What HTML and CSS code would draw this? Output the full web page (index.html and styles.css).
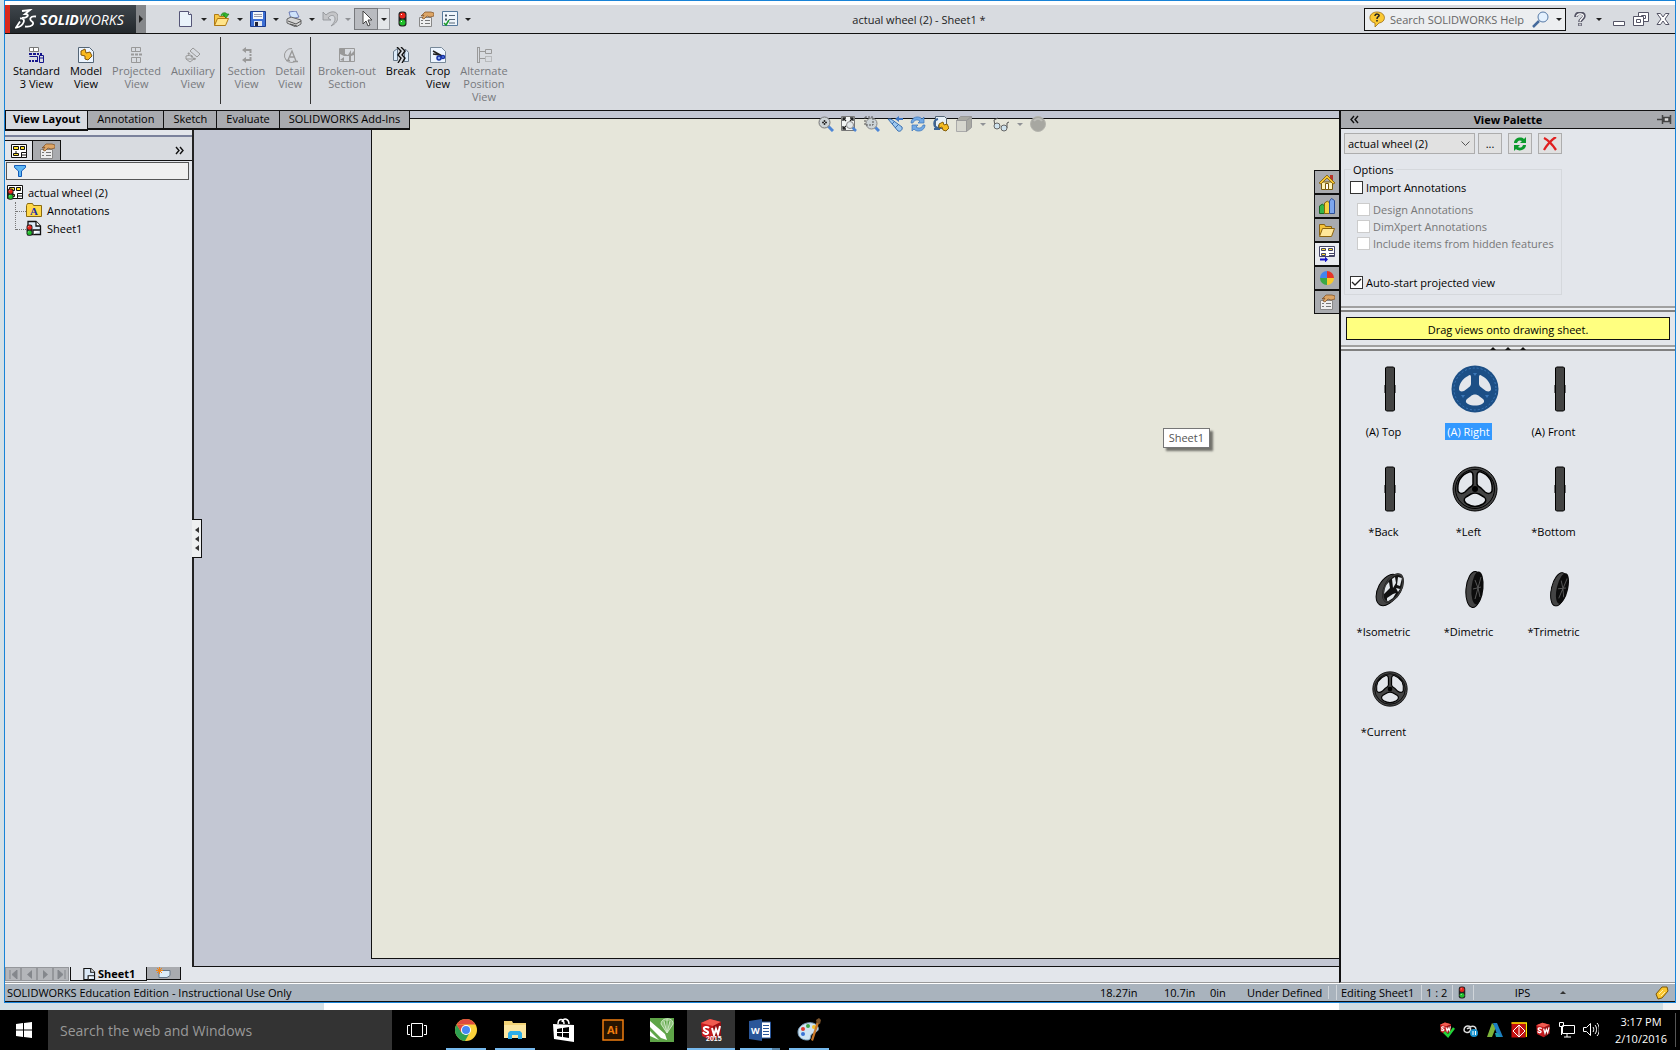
FILE: index.html
```html
<!DOCTYPE html>
<html lang="en">
  <head>
    <meta charset="UTF-8" />
    <meta name="viewport" content="width=device-width, initial-scale=1.0" />
    <title>actual wheel (2) - Sheet1 *</title>
    <link rel="stylesheet" href="styles.css">
  </head>
  <body>
    <!-- shared symbols -->
    <svg class="symbols" width="0" height="0" aria-hidden="true">
      <symbol id="props" viewBox="0 0 16 16">
        <path d="M1.500 6.500h12v9h-12z" fill="#eee" stroke="#888" />
        <path d="M3 9.500h2M7 9.500h5M3 12.500h2M7 12.500h5" stroke="#777" />
        <path d="M3 5l4-4h6l3 1v3l-4 1-3-1-3 3-2-1 2-3z" fill="#dca566" stroke="#7a4a1e" stroke-width=".7" />
      </symbol>
      <symbol id="light" viewBox="0 0 9 16">
        <rect x=".5" y=".5" width="8" height="15" rx="3" fill="#222" />
        <circle cx="4.500" cy="4.500" r="3" fill="#e8241c" />
        <circle cx="4.500" cy="11.500" r="3" fill="#1fbf2a" />
        <path d="M3 3.500h1M3 10.500h1" stroke="#fff" />
      </symbol>
      <symbol id="sheetset" viewBox="0 0 16 16">
        <path d="M.500 1.500h15v13H.500z" fill="#fff" stroke="#111" />
        <path d="M2.500 3.500h5v3h-5zM9.500 3.500h4v3h-4zM5 8v2.500M2.500 12.500v-2h5v2z" fill="#ffe12a" stroke="#111" />
        <path d="M10.500 9.500h5v5h-5zM10.500 12h5" fill="#fff" stroke="#111" />
      </symbol>
      <symbol id="page" viewBox="0 0 16 16">
        <path d="M2 1.500h8l4.500 4.500v8.500H2z" fill="#dbe9f7" stroke="#111" stroke-width="1.300" />
        <path d="M10 1.500V6h4.500M7 14.500V10h7.500" fill="#fff" stroke="#111" stroke-width="1.300" />
      </symbol>
      <symbol id="spokes" viewBox="0 0 46 46">
        <circle cx="23" cy="23" r="22" fill="#444" stroke="#000" />
        <circle cx="23" cy="23" r="19.500" fill="none" stroke="#000" />
        <path d="M17 6c3-1 4 1 4 4v8c0 2-2 3-4 4l-4 4c-3 2-6 2-7-1C5 16 9 9 17 6zM29 6c-3-1-4 1-4 4v8c0 2 2 3 4 4l4 4c3 2 6 2 7-1 1-9-3-16-11-19zM19 28c2-1 6-1 8 0l5 3c3 2 2 5-1 7-5 3-11 3-16 0-3-2-4-5-1-7z" fill="#e3e6eb" stroke="#000" stroke-width="1.500" />
        <circle cx="23" cy="23" r="3" fill="#000" />
      </symbol>
      <symbol id="edge" viewBox="0 0 12 46">
        <path d="M.500 19v8h11v-8z" fill="#000" />
        <path d="M1.500 2l1-1h7l1 1v42l-1 1h-7l-1-1z" fill="#444" stroke="#000" />
      </symbol>
      <symbol id="tilted" viewBox="0 0 30 36">
        <ellipse cx="13" cy="19" rx="10" ry="17" transform="rotate(28 13 19)" fill="#444" stroke="#000" />
        <ellipse cx="18" cy="17" rx="9" ry="16" transform="rotate(28 18 17)" fill="#111" />
        <path d="M17 8l3-2 1 6-3 5zM23 6l4 1-2 8-3-1zM10 15l4-4 1 6-6 6zM12 27l6-4 3-1-3 5-6 4zM21 17l4 1-2 3z" fill="#e2e6ea" />
        <ellipse cx="18" cy="17" rx="8" ry="15" transform="rotate(28 18 17)" fill="none" stroke="#3a3a3a" stroke-width="1.500" />
      </symbol>
      <symbol id="narrow" viewBox="0 0 20 38">
        <ellipse cx="9" cy="19.500" rx="8" ry="18" transform="rotate(5 9 19)" fill="#444" stroke="#000" />
        <ellipse cx="12.500" cy="18" rx="6" ry="16.500" transform="rotate(5 12 18)" fill="#0c0c0c" />
        <path d="M10 10l3 8-3 11M16 7l-3 11 2 9M8 19l8-2" stroke="#555" fill="none" />
      </symbol>
      <symbol id="cube" viewBox="0 0 24 24">
        <path d="M2 5l9-4 11 3v13l-9 6-10-5z" fill="#c61a1d" />
        <path d="M2 5l9-4 11 3-8 4z" fill="#f05b50" />
        <path d="M14 8l8-4v13l-9 6z" fill="#961013" />
        <path d="M10 10c-2-2-6-1-5 1s5 2 4 4-4 1-5-1M13 10l2 7 2-6 2 5 2-8" fill="none" stroke="#fff" stroke-width="2" />
      </symbol>
    </svg>

    <div class="window">
      <header class="titlebar">
        <div class="logo">
          <svg width="22" height="20" viewBox="0 0 22 20"><path d="M7 2l8-1-5 4c5 0 3 4-3 4M5 9.500c7-1 4 8-4 9l4-6M21 7.500c-6-1-7 3-4 5s0 6-7 5" fill="none" stroke="#fff" stroke-width="1.800" /></svg>
          <span class="logo-text"><b>SOLID</b>WORKS</span>
        </div>
        <button class="logo-arrow" aria-label="Menu"><span class="arrow-right"></span></button>
        <nav class="quick">
          <button class="tool" aria-label="New"><svg width="16" height="16"><path d="M1.500.500h9l3 3v12h-12z" fill="#eaf3fb" stroke="#557" /><path d="M10.500.500v3h3" fill="#fff" stroke="#557" /></svg></button>
          <button class="drop" aria-label="New options"></button>
          <button class="tool" aria-label="Open"><svg width="16" height="16"><path d="M.500 14.500v-11h4l1 2h6v3" fill="#f7c847" stroke="#b07a14" /><path d="M.500 14.500l3-7h11l-3 7z" fill="#ffe48a" stroke="#b07a14" /><path d="M7 5c0-4 5-4 6-2h2l-3 4-3-3h2" fill="#35b52f" stroke="#157515" stroke-width=".6" /></svg></button>
          <button class="drop" aria-label="Open options"></button>
          <button class="tool" aria-label="Save"><svg width="16" height="16"><path d="M.500.500h15v15h-15z" fill="#3d6fd4" stroke="#1b3a8c" /><path d="M3 1h10v7H3z" fill="#f4f7fb" /><path d="M4 3.500h8M4 5.500h8" stroke="#99a" /><path d="M4 10h8v5H4z" fill="#dfe6f2" /><path d="M5 11h3v4H5z" fill="#223" /></svg></button>
          <button class="drop" aria-label="Save options"></button>
          <button class="tool" aria-label="Print"><svg width="16" height="16"><path d="M3 1l7-1 3 6-8 2z" fill="#cfe3fa" stroke="#56a" stroke-width=".8" /><path d="M1 8l4-2 10 3v4l-5 3-9-4z" fill="#d5d5d5" stroke="#555" stroke-width=".9" /><path d="M2 10l8 3 5-3M4 13l7 2" stroke="#555" fill="none" /></svg></button>
          <button class="drop" aria-label="Print options"></button>
          <button class="tool" aria-label="Undo" disabled><svg width="16" height="16"><path d="M1 1v8h8L6 7c3-4 7-3 7 1 0 2-1 4-4 7 5-2 7-6 7-9 0-6-7-7-12-2z" fill="#c4c5c8" stroke="#8e9094" stroke-width=".8" /></svg></button>
          <button class="drop faded" aria-label="Undo options" disabled></button>
          <button class="tool pressed" aria-label="Select"><svg width="16" height="16"><path d="M5 0v13l3-3 2 5 2-1-2-5h4z" fill="#fff" stroke="#444" /></svg></button>
          <button class="drop boxed" aria-label="Select options"></button>
          <button class="tool" aria-label="Rebuild"><svg width="9" height="16"><use href="#light" /></svg></button>
          <button class="tool" aria-label="File properties"><svg width="16" height="16"><use href="#props" /></svg></button>
          <button class="tool" aria-label="Options"><svg width="16" height="16"><path d="M.500.500h15v14H.500z" fill="#eef4fa" stroke="#56799c" /><path d="M7 4.500h6M7 8.500h6M7 12h6" stroke="#567" /><path d="M3 3.500h2v2H3zM3 7.500h2v2H3z" fill="#456" /><path d="M2 12l2 2 3-5" fill="none" stroke="#1a9a2b" stroke-width="1.500" /></svg></button>
          <button class="drop" aria-label="More options"></button>
        </nav>
        <h1 class="title">actual wheel (2) - Sheet1 *</h1>
        <div class="help-search">
          <svg width="17" height="17"><path d="M8 1c9 0 10 10 2 11l-4 4V12C-2 10 0 1 8 1z" fill="#fbc933" stroke="#9a6c10" stroke-width=".8" /><path d="M6 5c0-3 5-2 4 0-1 1-2 1-2 3M8 9v1.500" fill="none" stroke="#222" stroke-width="1.500" /></svg>
          <input type="text" placeholder="Search SOLIDWORKS Help" aria-label="Search SOLIDWORKS Help">
          <svg width="17" height="17"><circle cx="11" cy="6" r="5" fill="#e3f1ff" stroke="#567aa6" /><path d="M7 10l-6 6" stroke="#456a9c" stroke-width="2.500" /></svg>
          <button class="drop" aria-label="Search options"></button>
        </div>
        <div class="window-buttons">
          <button aria-label="Help"><svg width="12" height="15"><path d="M2 5c0-5 8-5 8-1 0 3-4 3-4 6M6 11v3" fill="none" stroke="#556" stroke-width="3.500" /><path d="M2.500 4.500C3 1 9 1 9.500 4c0 2-3.500 3-3.500 5.500M6 11.500v2" fill="none" stroke="#fff" stroke-width="1.300" /></svg></button>
          <button class="drop" aria-label="Help options"></button>
          <button aria-label="Minimize"><svg width="14" height="14"><path d="M1.500 9.500h11v4h-11z" fill="#fff" stroke="#556" /></svg></button>
          <button aria-label="Restore"><svg width="16" height="14"><path d="M5.500.500h10v9h-10zM8.500 3.500h4v3h-4z" fill="#fff" stroke="#556" /><path d="M.500 4.500h10v9H.500zM3.500 7.500h4v3h-4z" fill="#fff" stroke="#556" /></svg></button>
          <button aria-label="Close"><svg width="14" height="14"><path d="M1 1.500h3.500L7 5l2.500-3.500H13L9 7l4 5.500H9.500L7 9l-2.500 3.500H1L5 7z" fill="#fff" stroke="#556" /></svg></button>
        </div>
      </header>

      <section class="ribbon">
        <button><svg width="16" height="16"><path d="M1.500.500h9v4h-9z" fill="#fff" stroke="#777" /><path d="M5.500.500v4h5" stroke="#777" fill="none" /><path d="M1 6h3v2H1zM5 6h3v2H5zM9 6h2v2H9zM12 6h2v2h-2zM1 13h2v2H1zM4 13h2v2H4zM7 13h3v2H7z" fill="#15158c" /><path d="M1.500 9.500h8v4M11.500 8.500h4v7h-4zM11.500 11h4" fill="none" stroke="#15158c" /></svg>Standard<br>3 View</button>
        <button><svg width="16" height="16"><path d="M.500.500h11l4 4v11H.500z" fill="#edf5ff" stroke="#567" /><path d="M3 4l4-2 1 4 4-1 2 4-4 4-3-1V9L3 8z" fill="#f9b91e" stroke="#83540a" /></svg>Model<br>View</button>
        <button disabled><svg width="16" height="16"><path d="M3.500.500h9v4h-9zM7.500.500v4M3.500 10.500h9v5h-9zM8.500 10.500v5" fill="none" stroke="#999" /><path d="M3 7.500h11" stroke="#999" stroke-width="2" stroke-dasharray="3 1" /></svg>Projected<br>View</button>
        <button disabled><svg width="16" height="16"><path d="M8 1l7 6-3 3-7-6zM1 9l5-1 3 4-4 3-4-3zM1 12h8" fill="none" stroke="#999" /><path d="M3 6l8 7" stroke="#999" stroke-width="2" stroke-dasharray="2 2" /></svg>Auxiliary<br>View</button>
        <hr>
        <button disabled><svg width="16" height="16"><path d="M6 3h6M11.500 2v4M11.500 7v2M11.500 10v4M6 13h6" stroke="#999" stroke-width="2" /><path d="M3 3l4-3v6zM3 13l4-3v6z" fill="#999" /></svg>Section<br>View</button>
        <button disabled><svg width="16" height="16"><path d="M10 1.500A7 7 0 1 0 13 14.500" fill="none" stroke="#999" /><path d="M6 13l4-9 4 10M8 10h5M4 13.500h4M11 14.500h5" fill="none" stroke="#999" stroke-width="1.300" /></svg>Detail<br>View</button>
        <hr>
        <button disabled><svg width="16" height="16"><path d="M.500 1.500h15v13H.500z" fill="none" stroke="#999" /><path d="M1 2h5v5l3 1 3-5v4l3-3v4l-3 1v5h-2V9H5L1 7zM1 13l4-3v4z" fill="#999" /></svg>Broken-out<br>Section</button>
        <button><svg width="16" height="16"><path d="M.500 4.500l4-3v12h-4zM12 2.500h1l2.500 3v9H11z" fill="#dcebfa" stroke="#678" /><path d="M4 0l4 4-3 4 3 3-3 5M8 0l4 4-3 4 3 3-3 5" fill="none" stroke="#111" stroke-width="1.400" /></svg>Break</button>
        <button><svg width="16" height="16"><path d="M.500.500h11l4 4v11H.500z" fill="#edf5ff" stroke="#789" /><path d="M3 4l9 5M3 7l7 1" stroke="#222" stroke-width="1.500" /><circle cx="9" cy="11" r="2" fill="#87a9f2" stroke="#1733a8" stroke-width="1.500" /><circle cx="13" cy="10" r="1.500" fill="#87a9f2" stroke="#1733a8" stroke-width="1.500" /></svg>Crop<br>View</button>
        <button disabled><svg width="16" height="16"><path d="M1.500.500v15M3.500.500v15M1 .500h3M1 15.500h3M3 4.500h6M3 11.500h6M9.500 2.500h6v4h-6z" fill="none" stroke="#999" /><path d="M9.500 9.500h6v5h-6z" fill="none" stroke="#999" stroke-dasharray="1 1" /></svg>Alternate<br>Position<br>View</button>
      </section>

      <main class="workspace">
        <nav class="ribbon-tabs">
          <button class="active">View Layout</button>
          <button>Annotation</button>
          <button>Sketch</button>
          <button>Evaluate</button>
          <button>SOLIDWORKS Add-Ins</button>
        </nav>

        <aside class="tree-panel">
          <div class="panel-tabs">
            <button class="active" aria-label="Feature manager"><svg width="16" height="16"><use href="#sheetset" /></svg></button>
            <button aria-label="Property manager"><svg width="16" height="16"><use href="#props" /></svg></button>
            <button class="expand" aria-label="Expand"><svg width="10" height="9"><path d="M1 1l3 3.500L1 8M5 1l3 3.500L5 8" fill="none" stroke="#111" stroke-width="1.400" /></svg></button>
          </div>
          <div class="filter">
            <svg width="12" height="12"><path d="M.500.500h11v2L7.500 6v5.500h-3V6l-4-3.500z" fill="#5eb6f2" stroke="#125ab8" /></svg>
            <input type="text" aria-label="Filter">
          </div>
          <ul class="tree">
            <li><svg width="16" height="16"><use href="#sheetset" /><use href="#light" y="4" width="7" height="12" /></svg>actual wheel (2)
              <ul>
                <li><svg width="16" height="16"><path d="M.500 3.500l1-2h5l1 2h8v11H.500z" fill="#ffd84a" stroke="#8a6a10" /><text x="4" y="13" class="note-letter">A</text></svg>Annotations</li>
                <li><svg width="16" height="16"><use href="#page" /><use href="#light" y="4" width="7" height="12" /></svg>Sheet1</li>
              </ul>
            </li>
          </ul>
          <button class="collapse" aria-label="Collapse panel"><span></span><span></span><span></span></button>
        </aside>

        <section class="canvas">
          <div class="sheet"></div>
          <div class="hud">
            <button aria-label="Zoom to fit"><svg width="16" height="16"><path d="M10 10l5 5" stroke="#4d86d6" stroke-width="3" /><circle cx="6.500" cy="6.500" r="5.500" fill="#ccd3d6" stroke="#777" /><path d="M4 6.500h5M6.500 4v5" stroke="#333" stroke-width="1.500" stroke-dasharray="2 1" /></svg></button>
            <button aria-label="Zoom to sheet"><svg width="16" height="16"><path d="M.500.500h13v14H.500z" fill="#f3f5f4" stroke="#777" /><path d="M2 2l3 3M12 2L9 5M2 13l3-3M2 5V2h3M9 2h3v3M2 10v3h3" fill="none" stroke="#222" stroke-width="1.300" /><path d="M11 11l4 4" stroke="#4d86d6" stroke-width="2.500" /><circle cx="9" cy="9" r="3.500" fill="#e4e8ea" stroke="#888" /></svg></button>
            <button aria-label="Zoom to area"><svg width="16" height="16"><path d="M11 11l4 4" stroke="#4d86d6" stroke-width="3" /><circle cx="7.500" cy="7.500" r="5.500" fill="#ccd3d6" stroke="#888" /><path d="M1 1h8v8H1z" fill="none" stroke="#555" stroke-dasharray="2 1" /></svg></button>
            <button aria-label="Previous view"><svg width="16" height="16"><path d="M1 3h3l11 8c1 3-2 5-4 4z" fill="#9cc8f0" stroke="#3b6fae" /><path d="M8 12l4-4M5 8l3-3" stroke="#3b6fae" /><path d="M8 3l4-3v2h4v2h-4v2z" fill="#3f78c5" /></svg></button>
            <button aria-label="Redraw"><svg width="16" height="16"><path d="M1 7c0-6 8-8 11-4l2-2v6H8l2-2C7 3 4 4 3 7zM15 9c0 6-8 8-11 4l-2 2V9h6l-2 2c3 2 6 1 7-2z" fill="#72a9e5" stroke="#3974b8" stroke-width=".7" /></svg></button>
            <button aria-label="3D drawing view"><svg width="16" height="16"><path d="M2.500.500h9l2 2v10h-11z" fill="#e8f0f6" stroke="#567" /><path d="M5 3C0 4 0 11 5 12M6 14V9M6 13H1" fill="none" stroke="#3c6496" stroke-width="2" /><path d="M6 8l4-2 1 3 3-1 2 4-3 3-3-1-1-3-3 1z" fill="#f4bb22" stroke="#86600d" /></svg></button>
            <button aria-label="Display style"><svg width="16" height="16"><path d="M.500 4.500h10v11H.500z" fill="#d6d6ce" stroke="#aaa" /><path d="M.500 4.500l4-4h11l-5 4zM10.500 4.500l5-4v11l-5 4z" fill="#a9a9a3" stroke="#999" /></svg></button>
            <button class="drop faded" aria-label="Display style options"></button>
            <button aria-label="Hide or show items"><svg width="16" height="16"><path d="M2 10L1 4l4-2M14 12V7l2-1" fill="none" stroke="#555" /><circle cx="4" cy="10" r="3" fill="#cfe3ee" stroke="#666" /><circle cx="11" cy="12" r="3" fill="#cfe3ee" stroke="#666" /></svg></button>
            <button class="drop faded" aria-label="Hide or show options"></button>
            <button aria-label="Appearance"><svg width="16" height="16"><circle cx="8" cy="8" r="7.500" fill="#a7a7a1" stroke="#b5b5ae" /><path d="M4 5c2-3 6-3 8 0" fill="none" stroke="#bdbdb7" stroke-width="2" /></svg></button>
          </div>
          <div class="sheet-tip">Sheet1</div>
          <nav class="pane-tabs">
            <button aria-label="Home"><svg width="16" height="16"><path d="M11 1h3v6h-3z" fill="#b8342a" /><path d="M2.500 8h11v7.500h-11z" fill="#fff3b5" stroke="#795a0c" /><path d="M0 9l8-8 8 8-2 1-6-6-6 6z" fill="#f6c531" stroke="#795a0c" stroke-width=".8" /><path d="M6.500 9.500h3v6h-3z" fill="#fff" stroke="#795a0c" /></svg></button>
            <button aria-label="Design library"><svg width="16" height="16"><path d="M.500 8l3-2 2 2v7.500h-5z" fill="#37b548" stroke="#15691f" /><path d="M5.500 5l3-2 2 2v10.500h-5z" fill="#f6d342" stroke="#84660c" /><path d="M10.500 3l2-2.500 3 2v13h-5z" fill="#7da6ed" stroke="#2b4e98" /></svg></button>
            <button aria-label="File explorer"><svg width="16" height="16"><path d="M.500 13.500V2.500h5l1 2h6v3" fill="#f4c23a" stroke="#8a620f" /><path d="M3.500 6.500h12l-3 8h-12z" fill="#ffe79a" stroke="#8a620f" /></svg></button>
            <button class="active" aria-label="View palette"><svg width="16" height="16"><path d="M.500.500h15v10H.500z" fill="#fff" stroke="#446" /><path d="M2.500 2.500h4v2h-4zM9.500 2.500h4v2h-4zM2.500 7.500h4v2h-4z" fill="#ffe12a" stroke="#446" /><path d="M10 7.500h5M10 9.500h5" stroke="#446" /><path d="M1 12.500h5v-2l3 3-3 3v-2H1z" fill="#1414c8" /></svg></button>
            <button aria-label="Appearances"><svg width="16" height="16"><path d="M8 8V1a7 7 0 0 0-7 7z" fill="#4285f0" /><path d="M8 8h7a7 7 0 0 0-7-7z" fill="#e63427" /><path d="M8 8v7a7 7 0 0 0 7-7z" fill="#f7c92e" /><path d="M8 8H1a7 7 0 0 0 7 7z" fill="#3aa845" /></svg></button>
            <button aria-label="Custom properties"><svg width="16" height="16"><use href="#props" /></svg></button>
          </nav>
        </section>

        <footer class="sheet-bar">
          <div class="sheet-nav">
            <button aria-label="First sheet" disabled><svg width="9" height="9"><path d="M1 0v9M8 0L3 4.500 8 9z" fill="#84878c" stroke="#84878c" /></svg></button>
            <button aria-label="Previous sheet" disabled><svg width="9" height="9"><path d="M7 0L2 4.500 7 9z" fill="#84878c" /></svg></button>
            <button aria-label="Next sheet" disabled><svg width="9" height="9"><path d="M2 0l5 4.500L2 9z" fill="#84878c" /></svg></button>
            <button aria-label="Last sheet" disabled><svg width="9" height="9"><path d="M8 0v9M1 0l5 4.500L1 9z" fill="#84878c" stroke="#84878c" /></svg></button>
          </div>
          <button class="sheet-tab"><svg width="14" height="12" viewBox="0 1 16 14"><use href="#page" width="16" height="16" /></svg>Sheet1</button>
          <button class="add-sheet" aria-label="Add sheet"><svg width="15" height="12"><path d="M3 3.500h11v5l-3 2H3z" fill="#dcecf8" stroke="#678" /><path d="M3.500 0v7M0 3.500h7M1 1l5 5M6 1L1 6" stroke="#f08518" /></svg></button>
        </footer>

        <aside class="palette">
          <div class="palette-head">
            <button aria-label="Collapse palette"><svg width="10" height="9"><path d="M5 1L2 4.500 5 8M9 1L6 4.500 9 8" fill="none" stroke="#111" stroke-width="1.400" /></svg></button>
            <h2>View Palette</h2>
            <button aria-label="Pin"><svg width="16" height="11"><path d="M0 5.500h5M5.500 1v9M7 3.500h5v4H7zM13.500 1v9" fill="#ddd" stroke="#444" stroke-width="1.500" /></svg></button>
          </div>
          <div class="palette-tools">
            <select aria-label="Part"><option>actual wheel (2)</option></select>
            <button aria-label="Browse">...</button>
            <button class="spaced" aria-label="Refresh"><svg width="14" height="14"><path d="M1 6c0-5 7-7 10-4l2-2v6H7l2-2C7 3 5 3 4 6zM13 8c0 5-7 7-10 4l-2 2V8h6l-2 2c2 1 4 1 5-2z" fill="#0b9a2c" /></svg></button>
            <button class="spaced" aria-label="Clear all"><svg width="14" height="14"><path d="M1 1c4 2 8 6 12 12M13 0C8 3 4 8 1 13" fill="none" stroke="#e01f1f" stroke-width="2.300" /></svg></button>
          </div>
          <fieldset class="options">
            <legend>Options</legend>
            <label><input type="checkbox">Import Annotations</label>
            <div class="sub-options">
              <label><input type="checkbox" disabled>Design Annotations</label>
              <label><input type="checkbox" disabled>DimXpert Annotations</label>
              <label><input type="checkbox" disabled>Include items from hidden features</label>
            </div>
            <label><input type="checkbox" checked>Auto-start projected view</label>
          </fieldset>
          <div class="rail"></div>
          <p class="hint">Drag views onto drawing sheet.</p>
          <div class="rail grip"><span></span><span></span><span></span></div>
          <div class="views">
            <figure><div class="thumb"><svg width="12" height="46"><use href="#edge" /></svg></div><figcaption>(A) Top</figcaption></figure>
            <figure class="selected"><div class="thumb"><svg width="48" height="48"><circle cx="24" cy="24" r="23.500" fill="#1c4f86" /><circle cx="24" cy="24" r="21" fill="none" stroke="#3c78b8" stroke-dasharray="2 2" /><path d="M17 11c2-2 3-1 3 1v7c0 2-2 3-3 4l-4 3c-3 1-5 0-5-2 0-5 4-11 9-13zM31 11c-2-2-3-1-3 1v7c0 2 2 3 3 4l4 3c3 1 5 0 5-2 0-5-4-11-9-13zM20 31c2-2 6-2 8 0l4 3c2 2 1 4-1 5-4 2-10 2-14 0-2-1-3-3-1-5z" fill="#e3e6eb" /><path d="M22 8h4l-2 3zM10 30h4l-2 3zM34 30h4l-2 3z" fill="#3c78b8" /></svg></div><figcaption>(A) Right</figcaption></figure>
            <figure><div class="thumb"><svg width="12" height="46"><use href="#edge" /></svg></div><figcaption>(A) Front</figcaption></figure>
            <figure><div class="thumb"><svg width="12" height="46"><use href="#edge" /></svg></div><figcaption>*Back</figcaption></figure>
            <figure><div class="thumb"><svg width="46" height="46"><use href="#spokes" /></svg></div><figcaption>*Left</figcaption></figure>
            <figure><div class="thumb"><svg width="12" height="46"><use href="#edge" /></svg></div><figcaption>*Bottom</figcaption></figure>
            <figure><div class="thumb"><svg width="30" height="36"><use href="#tilted" /></svg></div><figcaption>*Isometric</figcaption></figure>
            <figure><div class="thumb"><svg width="20" height="38"><use href="#narrow" /></svg></div><figcaption>*Dimetric</figcaption></figure>
            <figure><div class="thumb"><svg width="22" height="36" viewBox="0 0 22 38"><g transform="rotate(8 11 19)"><use href="#narrow" width="20" height="38" x="1" /></g></svg></div><figcaption>*Trimetric</figcaption></figure>
            <figure><div class="thumb"><svg width="36" height="36"><use href="#spokes" /></svg></div><figcaption>*Current</figcaption></figure>
          </div>
        </aside>
      </main>

      <footer class="statusbar">
        <span class="edition">SOLIDWORKS Education Edition - Instructional Use Only</span>
        <span class="coord-x">18.27in</span>
        <span class="coord-y">10.7in</span>
        <span class="coord-z">0in</span>
        <span class="defined">Under Defined</span>
        <div class="status-right">
          <span class="editing">Editing Sheet1</span>
          <span class="scale">1 : 2</span>
          <span class="rebuild"><svg width="8" height="13"><use href="#light" /></svg></span>
          <span class="units">IPS</span>
          <button class="drop up" aria-label="Units"></button>
          <svg class="tag" width="14" height="14"><path d="M1 8l6-7h5l1 4-6 7-4 1z" fill="#fbc72f" stroke="#7c5606" /><path d="M4 8l4-4M6 10l4-4" stroke="#fff0a8" /></svg>
        </div>
      </footer>
    </div>

    <div class="taskbar">
      <button class="start" aria-label="Start"><svg width="16" height="16"><path d="M0 2l7-1v6.500H0zM8 1l8-1v7.500H8zM0 8.500h7V15l-7-1zM8 8.500h8V16l-8-1z" fill="#fff" /></svg></button>
      <input class="web-search" type="text" placeholder="Search the web and Windows" aria-label="Search the web and Windows">
      <nav class="apps">
        <button aria-label="Task view"><svg width="20" height="14"><path d="M4.500.500h11v13h-11zM3 2.500H.500v9H3M17 2.500h2.500v9H17" fill="none" stroke="#fff" /></svg></button>
        <button class="open" aria-label="Chrome"><svg width="22" height="22"><circle cx="11" cy="11" r="11" fill="#fbd23b" /><path d="M1.500 5.500A11 11 0 0 1 20.500 5.500H11z" fill="#dd4b3e" /><path d="M1.500 5.500A11 11 0 0 0 10 22l5-9-8 1z" fill="#2ea052" /><path d="M1.500 5.500L6 13l5-7z" fill="#dd4b3e" /><circle cx="11" cy="11" r="5" fill="#fff" /><circle cx="11" cy="11" r="4" fill="#4687f4" /></svg></button>
        <button class="open" aria-label="File Explorer"><svg width="22" height="20"><path d="M0 1h8l1 2h13v15H0z" fill="#f2d376" /><path d="M0 5h22v13H0z" fill="#fbe6a0" /><path d="M4 19v-6l2-2h10l2 2v6h-4v-4H8v4z" fill="#2eaee8" /></svg></button>
        <button aria-label="Store"><svg width="22" height="24"><path d="M5 6c0-6 6-6 6 0M9 4c2-5 7-3 7 2" fill="none" stroke="#fff" stroke-width="1.500" /><path d="M0 6l21 1v17L1 21z" fill="#fff" /><path d="M4 11l5-1v4H4zM10 10l6-1v5h-6zM4 15h5v4l-5-1zM10 15h6v5l-6-1z" fill="#000" /></svg></button>
        <button aria-label="Illustrator"><svg width="22" height="22"><path d="M1 1h20v20H1z" fill="#261300" stroke="#f07d0f" stroke-width="1.500" /><text x="5" y="15" class="ai-text">Ai</text></svg></button>
        <button aria-label="CorelDRAW"><svg width="24" height="24"><path d="M0 0h24v24H0z" fill="#5fa548" /><path d="M0 3l15 13 2 6-6-2L0 9zM0 13l9 9-9-4z" fill="#fff" /><path d="M17 15l-6-9c0-7 13-7 12 0zM14 3l3 12 3-12M17 1v14" fill="#8fc47d" stroke="#d0e9c7" /></svg></button>
        <button class="open current" aria-label="SOLIDWORKS"><svg width="24" height="24"><use href="#cube" /><text x="7" y="23" class="year-text">2015</text></svg></button>
        <button class="open stacked" aria-label="Word"><svg width="22" height="22"><path d="M11 3h10.500v16H11z" fill="#fff" stroke="#2a5699" /><path d="M14 6.500h6M14 9.500h6M14 12.500h6M14 15.500h6" stroke="#2a5699" /><path d="M0 2l13-2v22L0 20z" fill="#2a5699" /><text x="2" y="15" class="word-text">W</text></svg></button>
        <button class="open" aria-label="Paint"><svg width="24" height="24"><path d="M1 14C1 5 17 1 21 9c2 6-6 5-7 8s0 5-4 5S1 20 1 14z" fill="#cfe4f3" stroke="#7ba0bc" /><circle cx="6" cy="11" r="2" fill="#dd3a2f" /><circle cx="11" cy="8" r="2" fill="#3ba54a" /><circle cx="17" cy="9" r="2" fill="#f2bf2b" /><circle cx="6" cy="16" r="2" fill="#3a73d6" /><path d="M20 3l-6 19 2 1 6-18z" fill="#c9792c" /><path d="M20 5l-1-3 3-2 2 2-1 4z" fill="#7b542c" /></svg></button>
      </nav>
      <div class="tray">
        <svg width="16" height="16"><use href="#cube" width="13" height="13" /><path d="M5 10l4 4 6-8" fill="none" stroke="#22d43a" stroke-width="2.500" /></svg>
        <svg width="16" height="16"><path d="M8 5c-5-3-7 1-7 3s4 4 6 1-1-4-3-2M7 5c4-2 6 0 6 3" fill="none" stroke="#ddd" stroke-width="1.500" /><circle cx="11" cy="11" r="4" fill="#1792cf" /><path d="M10 9v4M12.500 9v4" stroke="#fff" /></svg>
        <svg width="16" height="16"><path d="M5 1l-5 14h5l4-10z" fill="#7db43a" /><path d="M6 1h4l6 14h-5z" fill="#1c7ec0" /><path d="M8 11h3l3 4H9z" fill="#1c9dae" /></svg>
        <svg width="16" height="16"><path d="M.500.500h14v15H.500z" fill="#c40f0f" /><path d="M.500 1h15v14" fill="none" stroke="#ffe600" stroke-width="1.500" /><path d="M8 3l6 6-6 6-6-6zM8 4v10" fill="none" stroke="#fff" /></svg>
        <svg width="16" height="16"><use href="#cube" /></svg>
        <svg width="16" height="16"><path d="M3.500 3.500h12v8h-12zM8 12v3M5 15h7M.500.500h4v4h-4zM2.500 5v8" fill="#000" stroke="#fff" /></svg>
        <svg width="16" height="16"><path d="M.500 5.500h3l4-4v12l-4-4h-3zM10 5c1 1 1 4 0 5M12 3c2 2 2 7 0 9M14 1c3 3 3 10 0 13" fill="none" stroke="#fff" /></svg>
        <div class="clock">3:17 PM<br>2/10/2016</div>
      </div>
    </div>
  </body>
</html>
```
FILE: styles.css
```css
* {
  box-sizing: border-box;
}
body {
  margin: 0;
  height: 100vh;
  display: flex;
  flex-direction: column;
  overflow: hidden;
  font-family: "Open Sans", "Noto Sans", sans-serif;
  font-size: 11px;
  line-height: 13px;
  color: #000;
  background: linear-gradient(to right, #d3e0e6 324px, #fff 324px, #fff 1339px, #d0dde2 1339px, #d0dde2 1663px, #f0f0f0 1663px);
}
button {
  font: inherit;
  color: inherit;
  background: none;
  border: none;
  padding: 0;
  display: flex;
  align-items: center;
  justify-content: center;
}
input,
select {
  font: inherit;
  color: inherit;
}
h1,
h2 {
  margin: 0;
  font-size: 11px;
}
svg {
  flex: none;
  display: block;
}
.symbols {
  position: absolute;
}

/* window frame */
.window {
  flex: 1;
  min-height: 0;
  margin: 0 4px 7px;
  display: flex;
  flex-direction: column;
  border: 1px solid #1883d7;
  background: #d8dbe0;
}
.titlebar {
  height: 33px;
  flex: none;
  display: flex;
  align-items: center;
  border-top: 4px solid #fff;
  border-bottom: 1px solid #111;
}
.logo {
  align-self: stretch;
  width: 131px;
  display: flex;
  align-items: center;
  gap: 3px;
  padding-left: 5px;
  border-left: 5px solid #da291c;
  background: linear-gradient(#3f464c, #23282c);
  color: #fff;
}
.logo-text {
  font-size: 14px;
  font-style: italic;
}
.logo-arrow {
  align-self: stretch;
  width: 10px;
  background: #85878a;
}
.arrow-right {
  border: 4px solid transparent;
  border-left-color: #222;
  border-right: none;
}
.quick {
  display: flex;
  align-items: center;
  padding-left: 28px;
}
.tool {
  width: 24px;
  height: 22px;
}
.drop {
  width: 12px;
  height: 22px;
}
.drop::before {
  content: "";
  border: 3px solid transparent;
  border-top-color: #222;
  border-bottom: none;
}
.drop.faded::before {
  border-top-color: #909296;
}
.drop.up::before {
  border: 3px solid transparent;
  border-bottom-color: #333;
  border-top: none;
}
.pressed {
  background: #b9bbc0;
  border: 1px solid #77797d;
}
.boxed {
  border: 1px solid #999ba0;
  border-left: none;
  background: #e4e6e9;
}
.title {
  flex: 1;
  text-align: center;
  font-weight: normal;
  color: #222;
}
.help-search {
  width: 202px;
  height: 23px;
  display: flex;
  align-items: center;
  gap: 4px;
  padding-left: 4px;
  border: 1px solid #111;
  background: #eceef0;
}
.help-search input {
  flex: 1;
  min-width: 0;
  border: none;
  padding: 0;
  background: none;
}
.help-search input::placeholder {
  color: #666;
}
.window-buttons {
  display: flex;
  align-items: center;
  gap: 7px;
  padding: 0 5px 0 8px;
}

/* command manager */
.ribbon {
  height: 77px;
  flex: none;
  display: flex;
  align-items: stretch;
  padding: 3px 3px 6px;
  border-bottom: 1px solid #111;
}
.ribbon button {
  flex-direction: column;
  justify-content: flex-start;
  padding: 10px 5px 0;
}
.ribbon button svg {
  margin-bottom: 1px;
}
.ribbon button:disabled {
  color: #77797d;
}
.ribbon hr {
  margin: 0 2px 0 0;
  border: none;
  border-left: 1px solid #333;
}

/* workspace */
.workspace {
  flex: 1;
  min-height: 0;
  position: relative;
  display: grid;
  grid-template-columns: 189px 1fr 336px;
  grid-template-rows: 1fr 16px;
}
.ribbon-tabs {
  position: absolute;
  top: 0;
  left: 0;
  z-index: 2;
  display: flex;
  align-items: flex-start;
}
.ribbon-tabs button {
  height: 19px;
  padding: 0 9px 2px;
  background: #a9abaf;
  border: solid #111;
  border-width: 0 1px 2px 0;
}
.ribbon-tabs .active {
  height: 20px;
  padding: 0 7px 3px;
  font-weight: bold;
  background: #d8dbe0;
  border-left: 1px solid #111;
}
.tree-panel {
  position: relative;
  padding-top: 24px;
  background: #e3e6eb;
  border-right: 2px solid #222;
}
.panel-tabs {
  display: flex;
  height: 26px;
  padding-top: 3px;
  background: #d8dbe0;
  border-top: 2px solid #7b829c;
  border-bottom: 1px solid #111;
}
.panel-tabs button {
  width: 28px;
  background: #a9abaf;
  border-top: 1px solid #111;
  border-right: 1px solid #111;
}
.panel-tabs .active {
  background: #e3e6eb;
}
.panel-tabs .expand {
  margin-left: auto;
  width: 25px;
  border: none;
  background: none;
}
.filter {
  height: 18px;
  margin: 1px 3px 0 1px;
  padding-left: 7px;
  display: flex;
  align-items: center;
  border: 1px solid #555;
  background: #efefef;
}
.filter input {
  flex: 1;
  min-width: 0;
  border: none;
  background: none;
}
.tree,
.tree ul {
  margin: 0;
  padding: 0;
  list-style: none;
  line-height: 18px;
}
.tree {
  padding: 4px 2px;
}
.tree li svg {
  float: left;
  margin: 0 5px 0 0;
}
.tree ul {
  margin-left: 8px;
  border-left: 1px dotted #777;
  height: 28px;
}
.tree ul li {
  height: 18px;
}
.tree ul li::before {
  content: "";
  float: left;
  width: 10px;
  height: 9px;
  border-bottom: 1px dotted #777;
}
.note-letter {
  font: bold 11px "Liberation Serif", serif;
  fill: #1a2ea8;
}
.collapse {
  position: absolute;
  top: 408px;
  left: 187px;
  z-index: 1;
  width: 10px;
  height: 39px;
  flex-direction: column;
  gap: 3px;
  background: #eef0f1;
  border: 1px solid #111;
  border-left: none;
}
.collapse span {
  border: 3px solid transparent;
  border-right: 4px solid #333;
  border-left: none;
}

/* drawing area */
.canvas {
  position: relative;
  padding: 7px 0 7px 177px;
  background: #c3c7d3;
  border-bottom: 1px solid #111;
}
.sheet {
  height: 100%;
  background: #e6e6da;
  border: 1px solid #111;
  border-right: none;
}
.hud {
  position: absolute;
  top: 5px;
  left: 624px;
  display: flex;
  align-items: center;
  gap: 7px;
}
.hud .drop {
  width: 7px;
  height: 16px;
}
.sheet-tip {
  position: absolute;
  top: 317px;
  right: 129px;
  padding: 2px 5px 3px;
  color: #555;
  background: #fff;
  border: 1px solid #767676;
  box-shadow: 3px 3px 2px rgba(0, 0, 0, 0.5);
}
.pane-tabs {
  position: absolute;
  top: 59px;
  right: 0;
  border: solid #111;
  border-width: 1px 0 1px 1px;
}
.pane-tabs button {
  width: 24px;
  height: 24px;
  background: #a9abaf;
  border-bottom: 2px solid #111;
}
.pane-tabs button:last-child {
  height: 22px;
  border-bottom: none;
}
.pane-tabs .active {
  background: #e9ebef;
}

/* sheet tabs */
.sheet-bar {
  grid-column: 1 / 3;
  display: flex;
  align-items: flex-start;
  background: #e3e6eb;
  border-bottom: 1px solid #999;
}
.sheet-nav {
  display: flex;
}
.sheet-nav button {
  width: 16px;
  height: 14px;
  background: #b4b6ba;
  border: 1px solid #95979b;
}
.sheet-tab {
  height: 14px;
  gap: 2px;
  margin-left: 1px;
  padding: 0 11px;
  font-weight: bold;
  background: #e3e6eb;
  border: solid #111;
  border-width: 0 1px 1px;
}
.add-sheet {
  width: 34px;
  height: 13px;
  background: #a9abaf;
  border: solid #111;
  border-width: 0 1px 1px 0;
}

/* view palette */
.palette {
  grid-column: 3;
  grid-row: 1 / 3;
  min-width: 0;
  background: #e3e6eb;
  border-left: 2px solid #111;
  border-bottom: 1px solid #999;
}
.palette-head {
  height: 18px;
  display: flex;
  align-items: center;
  padding: 0 2px 0 8px;
  background: #a9abaf;
  border-bottom: 1px solid #111;
}
.palette-head h2 {
  flex: 1;
  text-align: center;
}
.palette-tools {
  display: flex;
  padding: 4px 3px 3px;
}
.palette-tools select {
  appearance: none;
  width: 131px;
  height: 21px;
  padding: 0 3px;
  border: 1px solid #adadad;
  border-radius: 0;
  background: #e1e1e1 url("data:image/svg+xml,%3Csvg xmlns='http://www.w3.org/2000/svg' width='9' height='6'%3E%3Cpath d='M.5.500l4 4 4-4' fill='none' stroke='%23555'/%3E%3C/svg%3E") no-repeat right 4px center;
}
.palette-tools button {
  width: 24px;
  height: 21px;
  margin-left: 3px;
  background: #e1e1e1;
  border: 1px solid #adadad;
}
.palette-tools .spaced {
  margin-left: 6px;
}
.options {
  position: relative;
  width: 218px;
  height: 126px;
  margin: 12px 0 0 3px;
  padding: 11px 0 0 5px;
  border: 1px solid #d5d8dc;
}
.options legend {
  position: absolute;
  top: -7px;
  left: 6px;
  padding: 0 2px;
  background: #e3e6eb;
}
.options label {
  display: flex;
  align-items: center;
  gap: 3px;
  height: 13px;
}
.options input {
  appearance: none;
  flex: none;
  width: 13px;
  height: 13px;
  margin: 0;
  background: #fff;
  border: 1px solid #333;
}
.options input:disabled {
  border-color: #ccc;
}
.options input:checked {
  background: #fff url("data:image/svg+xml,%3Csvg xmlns='http://www.w3.org/2000/svg' width='11' height='11'%3E%3Cpath d='M1 5l3 3 6-6' fill='none' stroke='%23222' stroke-width='1.300'/%3E%3C/svg%3E") no-repeat center;
}
.sub-options {
  display: flex;
  flex-direction: column;
  gap: 4px;
  padding: 9px 0 26px 7px;
  color: #777;
}
.rail {
  height: 6px;
  margin-top: 11px;
  border-top: 2px solid #a0a0a0;
  border-bottom: 2px solid #808080;
  background: #eceef1;
}
.hint {
  height: 23px;
  margin: 5px 5px 0;
  padding-top: 5px;
  text-align: center;
  background: #ffff80;
  border: 1px solid #111;
}
.grip {
  margin-top: 5px;
  display: flex;
  justify-content: center;
  gap: 9px;
}
.grip span {
  height: 3px;
  border: 3px solid transparent;
  border-bottom-color: #111;
  border-top: none;
}
.views {
  display: grid;
  grid-template-columns: repeat(3, 85px);
  grid-auto-rows: 100px;
  padding-top: 12px;
}
.views figure {
  margin: 0;
  display: flex;
  flex-direction: column;
  align-items: center;
}
.thumb {
  height: 52px;
  padding-left: 13px;
  display: flex;
  align-items: center;
}
.views figcaption {
  margin-top: 8px;
  padding: 2px;
}
.selected figcaption {
  color: #fff;
  background: #3399ff;
}

/* status bar */
.statusbar {
  height: 19px;
  flex: none;
  display: flex;
  align-items: center;
  background: #a9b3bd;
  border-top: 1px solid #fff;
  border-bottom: 1px solid #111;
}
.edition {
  flex: 1;
  padding-left: 2px;
}
.coord-x {
  width: 64px;
}
.coord-y {
  width: 46px;
}
.coord-z {
  width: 37px;
}
.defined {
  width: 82px;
  border-right: 1px solid #d0d5da;
}
.status-right {
  width: 346px;
  display: flex;
  align-items: center;
  padding: 0 6px 0 7px;
}
.editing,
.scale,
.rebuild {
  padding: 1px 4px;
  border-right: 1px solid #d0d5da;
}
.editing {
  width: 86px;
  border-left: 1px solid #d0d5da;
}
.scale {
  width: 31px;
}
.rebuild {
  width: 21px;
  padding: 1px 5px;
}
.units {
  width: 83px;
  padding-left: 14px;
  text-align: center;
}
.tag {
  margin-left: auto;
}

/* taskbar */
.taskbar {
  height: 40px;
  flex: none;
  display: flex;
  background: #000;
  color: #fff;
}
.start {
  width: 48px;
}
.web-search {
  width: 344px;
  padding: 0 12px;
  font-size: 14px;
  border: none;
  background: #333;
}
.web-search::placeholder {
  color: #999;
}
.apps {
  flex: 1;
  display: flex;
  gap: 1px;
  padding-left: 1px;
}
.apps button {
  position: relative;
  width: 48px;
}
.open::after {
  content: "";
  position: absolute;
  bottom: 0;
  left: 4px;
  right: 4px;
  height: 2px;
  background: #76b9ed;
}
.current {
  background: #333;
}
.apps .current::after {
  left: 0;
  right: 0;
}
.stacked::after {
  border-right: 8px solid #5583a6;
}
.year-text {
  font: bold 7px "Liberation Sans", sans-serif;
  fill: #fff;
}
.ai-text {
  font: bold 11px "Open Sans", sans-serif;
  fill: #f07d0f;
}
.word-text {
  font: bold 9px "Open Sans", sans-serif;
  fill: #fff;
}
.tray {
  display: flex;
  align-items: center;
  gap: 8px;
  padding-right: 4px;
}
.clock {
  width: 69px;
  padding: 0 8px;
  text-align: center;
  line-height: 17px;
  border-right: 1px solid #555;
  white-space: nowrap;
}
```
